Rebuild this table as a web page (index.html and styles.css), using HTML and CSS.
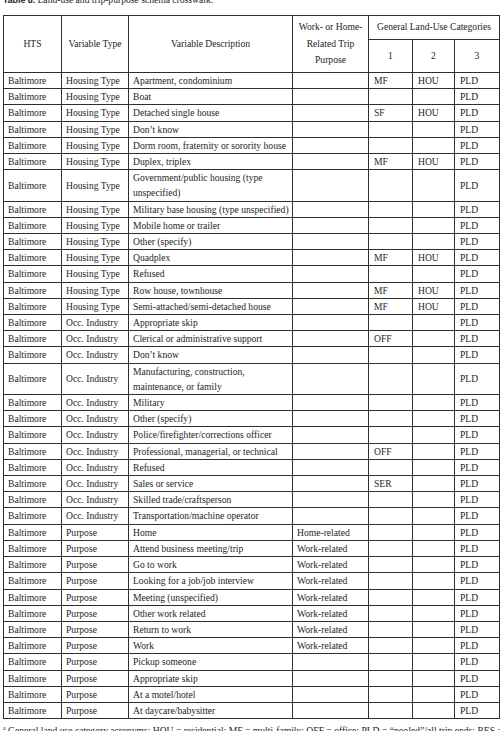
FILE: index.html
```html
<!DOCTYPE html>
<html lang="en">
<head>
<meta charset="utf-8">
<title>Table 8. Land-use and trip-purpose schema crosswalk</title>
<link rel="stylesheet" href="styles.css">
</head>
<body>
<div class="page">
  <p class="caption"><span class="label">Table 8.</span> Land-use and trip-purpose schema crosswalk.<sup>a</sup></p>
  <table class="crosswalk">
    <colgroup>
      <col class="c-hts"><col class="c-type"><col class="c-desc"><col class="c-work"><col class="c-1"><col class="c-2"><col class="c-3">
    </colgroup>
    <thead>
      <tr class="h1">
        <th rowspan="2">HTS</th>
        <th rowspan="2">Variable Type</th>
        <th rowspan="2">Variable Description</th>
        <th rowspan="2" class="work">Work- or Home-<br>Related Trip<br>Purpose</th>
        <th colspan="3">General Land-Use Categories</th>
      </tr>
      <tr class="h2">
        <th>1</th><th>2</th><th>3</th>
      </tr>
    </thead>
    <tbody>
      <tr><td>Baltimore</td><td>Housing Type</td><td>Apartment, condominium</td><td></td><td>MF</td><td>HOU</td><td>PLD</td></tr>
      <tr><td>Baltimore</td><td>Housing Type</td><td>Boat</td><td></td><td></td><td></td><td>PLD</td></tr>
      <tr><td>Baltimore</td><td>Housing Type</td><td>Detached single house</td><td></td><td>SF</td><td>HOU</td><td>PLD</td></tr>
      <tr><td>Baltimore</td><td>Housing Type</td><td>Don’t know</td><td></td><td></td><td></td><td>PLD</td></tr>
      <tr><td>Baltimore</td><td>Housing Type</td><td>Dorm room, fraternity or sorority house</td><td></td><td></td><td></td><td>PLD</td></tr>
      <tr><td>Baltimore</td><td>Housing Type</td><td>Duplex, triplex</td><td></td><td>MF</td><td>HOU</td><td>PLD</td></tr>
      <tr><td>Baltimore</td><td>Housing Type</td><td>Government/public housing (type<br>unspecified)</td><td></td><td></td><td></td><td>PLD</td></tr>
      <tr><td>Baltimore</td><td>Housing Type</td><td>Military base housing (type unspecified)</td><td></td><td></td><td></td><td>PLD</td></tr>
      <tr><td>Baltimore</td><td>Housing Type</td><td>Mobile home or trailer</td><td></td><td></td><td></td><td>PLD</td></tr>
      <tr><td>Baltimore</td><td>Housing Type</td><td>Other (specify)</td><td></td><td></td><td></td><td>PLD</td></tr>
      <tr><td>Baltimore</td><td>Housing Type</td><td>Quadplex</td><td></td><td>MF</td><td>HOU</td><td>PLD</td></tr>
      <tr><td>Baltimore</td><td>Housing Type</td><td>Refused</td><td></td><td></td><td></td><td>PLD</td></tr>
      <tr><td>Baltimore</td><td>Housing Type</td><td>Row house, townhouse</td><td></td><td>MF</td><td>HOU</td><td>PLD</td></tr>
      <tr><td>Baltimore</td><td>Housing Type</td><td>Semi-attached/semi-detached house</td><td></td><td>MF</td><td>HOU</td><td>PLD</td></tr>
      <tr><td>Baltimore</td><td>Occ. Industry</td><td>Appropriate skip</td><td></td><td></td><td></td><td>PLD</td></tr>
      <tr><td>Baltimore</td><td>Occ. Industry</td><td>Clerical or administrative support</td><td></td><td>OFF</td><td></td><td>PLD</td></tr>
      <tr><td>Baltimore</td><td>Occ. Industry</td><td>Don’t know</td><td></td><td></td><td></td><td>PLD</td></tr>
      <tr><td>Baltimore</td><td>Occ. Industry</td><td>Manufacturing, construction,<br>maintenance, or family</td><td></td><td></td><td></td><td>PLD</td></tr>
      <tr><td>Baltimore</td><td>Occ. Industry</td><td>Military</td><td></td><td></td><td></td><td>PLD</td></tr>
      <tr><td>Baltimore</td><td>Occ. Industry</td><td>Other (specify)</td><td></td><td></td><td></td><td>PLD</td></tr>
      <tr><td>Baltimore</td><td>Occ. Industry</td><td>Police/firefighter/corrections officer</td><td></td><td></td><td></td><td>PLD</td></tr>
      <tr><td>Baltimore</td><td>Occ. Industry</td><td>Professional, managerial, or technical</td><td></td><td>OFF</td><td></td><td>PLD</td></tr>
      <tr><td>Baltimore</td><td>Occ. Industry</td><td>Refused</td><td></td><td></td><td></td><td>PLD</td></tr>
      <tr><td>Baltimore</td><td>Occ. Industry</td><td>Sales or service</td><td></td><td>SER</td><td></td><td>PLD</td></tr>
      <tr><td>Baltimore</td><td>Occ. Industry</td><td>Skilled trade/craftsperson</td><td></td><td></td><td></td><td>PLD</td></tr>
      <tr><td>Baltimore</td><td>Occ. Industry</td><td>Transportation/machine operator</td><td></td><td></td><td></td><td>PLD</td></tr>
      <tr><td>Baltimore</td><td>Purpose</td><td>Home</td><td>Home-related</td><td></td><td></td><td>PLD</td></tr>
      <tr><td>Baltimore</td><td>Purpose</td><td>Attend business meeting/trip</td><td>Work-related</td><td></td><td></td><td>PLD</td></tr>
      <tr><td>Baltimore</td><td>Purpose</td><td>Go to work</td><td>Work-related</td><td></td><td></td><td>PLD</td></tr>
      <tr><td>Baltimore</td><td>Purpose</td><td>Looking for a job/job interview</td><td>Work-related</td><td></td><td></td><td>PLD</td></tr>
      <tr><td>Baltimore</td><td>Purpose</td><td>Meeting (unspecified)</td><td>Work-related</td><td></td><td></td><td>PLD</td></tr>
      <tr><td>Baltimore</td><td>Purpose</td><td>Other work related</td><td>Work-related</td><td></td><td></td><td>PLD</td></tr>
      <tr><td>Baltimore</td><td>Purpose</td><td>Return to work</td><td>Work-related</td><td></td><td></td><td>PLD</td></tr>
      <tr><td>Baltimore</td><td>Purpose</td><td>Work</td><td>Work-related</td><td></td><td></td><td>PLD</td></tr>
      <tr><td>Baltimore</td><td>Purpose</td><td>Pickup someone</td><td></td><td></td><td></td><td>PLD</td></tr>
      <tr><td>Baltimore</td><td>Purpose</td><td>Appropriate skip</td><td></td><td></td><td></td><td>PLD</td></tr>
      <tr><td>Baltimore</td><td>Purpose</td><td>At a motel/hotel</td><td></td><td></td><td></td><td>PLD</td></tr>
      <tr><td>Baltimore</td><td>Purpose</td><td>At daycare/babysitter</td><td></td><td></td><td></td><td>PLD</td></tr>
    </tbody>
  </table>
  <p class="note"><sup>a</sup> General land use category acronyms: HOU = residential; MF = multi-family; OFF = office; PLD = “pooled”/all trip ends; RES = retail; SER = service; SF = single-family.</p>
</div>
</body>
</html>
```

FILE: styles.css
```css
html, body {
  margin: 0;
  padding: 0;
  background: #ffffff;
}

body {
  font-family: "Liberation Serif", "Times New Roman", serif;
  font-size: 9.6px;
  color: #1e1e1e;
  overflow: hidden;
}

.page {
  padding: 0 1px 0 3px;
}

.caption {
  margin: -7px 0 8px 0;
  line-height: 13px;
  font-size: 9.6px;
  white-space: nowrap;
}

.caption .label {
  font-family: "Liberation Sans", Arial, sans-serif;
  font-weight: bold;
  font-size: 8.8px;
}

.caption sup,
.note sup {
  font-size: 6px;
  line-height: 0;
}

.crosswalk {
  width: 496px;
  table-layout: fixed;
  border-collapse: collapse;
}

.c-hts { width: 58px; }
.c-type { width: 67px; }
.c-desc { width: 164px; }
.c-work { width: 76px; }
.c-1 { width: 44px; }
.c-2 { width: 42px; }
.c-3 { width: 45px; }

.crosswalk th,
.crosswalk td {
  border: 1px solid #2e2e2e;
  padding: 0 4px;
  vertical-align: middle;
}

.crosswalk th {
  font-weight: normal;
  text-align: center;
  line-height: 16.5px;
  white-space: nowrap;
}

.crosswalk .h1 { height: 24px; }
.crosswalk .h2 { height: 33px; }

.crosswalk td {
  line-height: 15.2px;
  text-align: left;
  white-space: nowrap;
}

.crosswalk td:nth-child(n+5) {
  padding-left: 5px;
}

.note {
  margin: 5px 0 0 0;
  line-height: 13px;
  white-space: nowrap;
}
```
